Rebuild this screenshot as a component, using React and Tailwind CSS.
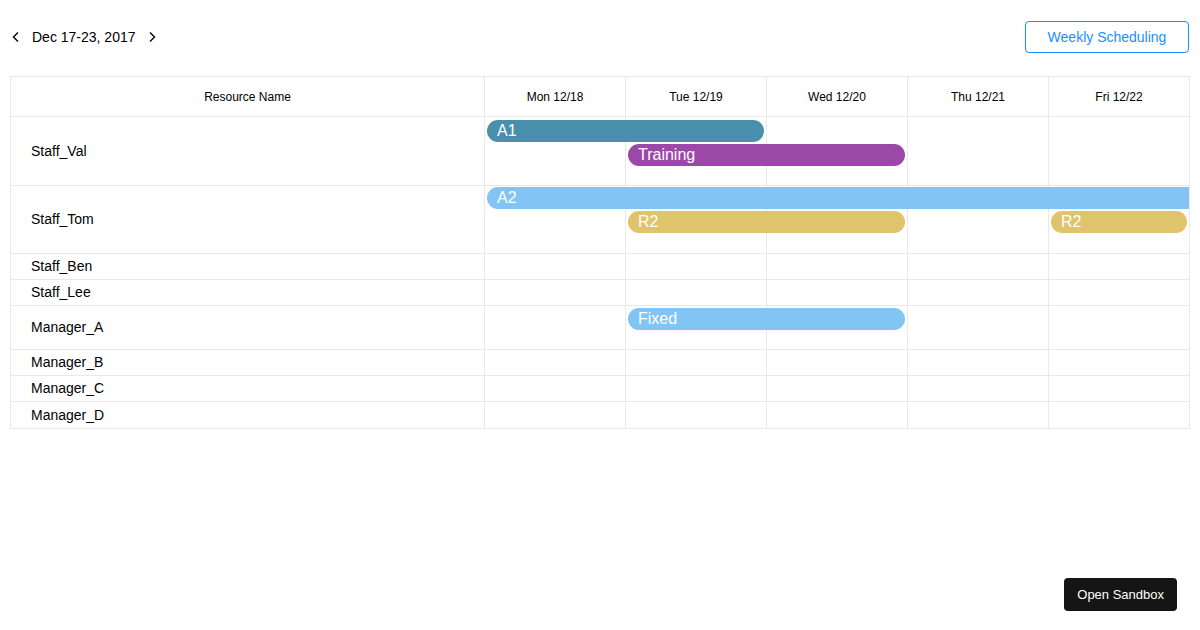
import React from "react";

const days = ["Mon 12/18", "Tue 12/19", "Wed 12/20", "Thu 12/21", "Fri 12/22"];
const DAY = 141;

const rows = [
  { name: "Staff_Val", h: "h-[69px]", events: [
    { label: "A1", start: 0, len: 2, top: 2, color: "bg-[#4a8fab]" },
    { label: "Training", start: 1, len: 2, top: 26, color: "bg-[#9b48a8]" },
  ] },
  { name: "Staff_Tom", h: "h-[68px]", events: [
    { label: "A2", start: 0, len: 5, top: 0, color: "bg-[#82c4f4]", open: true },
    { label: "R2", start: 1, len: 2, top: 24, color: "bg-[#dfc46c]" },
    { label: "R2", start: 4, len: 1, top: 24, color: "bg-[#dfc46c]" },
  ] },
  { name: "Staff_Ben", h: "h-[26px]", events: [] },
  { name: "Staff_Lee", h: "h-[26px]", events: [] },
  { name: "Manager_A", h: "h-[44px]", events: [
    { label: "Fixed", start: 1, len: 2, top: 1, color: "bg-[#82c4f4]" },
  ] },
  { name: "Manager_B", h: "h-[26px]", events: [] },
  { name: "Manager_C", h: "h-[26px]", events: [] },
  { name: "Manager_D", h: "h-[26px]", events: [] },
];

export default function App() {
  return (
    <div className="relative w-[1200px] h-[630px] bg-white text-black" style={{ fontFamily: '"Liberation Sans", Arial, sans-serif' }}>
      <div className="flex items-center justify-between pl-[10px] pr-[11px] pt-[21px]">
        <div className="flex items-center gap-[10px] text-[14px]">
          <svg width="12" height="12" viewBox="0 0 12 12" fill="none" stroke="#000" strokeWidth="1.4"><path d="M8 1.5 3.5 6 8 10.5" /></svg>
          <span>Dec 17-23, 2017</span>
          <svg width="12" height="12" viewBox="0 0 12 12" fill="none" stroke="#000" strokeWidth="1.4"><path d="M4 1.5 8.5 6 4 10.5" /></svg>
        </div>
        <button className="w-[164px] h-[32px] border border-[#1890ff] rounded-[4px] text-[#1890ff] text-[14px]">Weekly Scheduling</button>
      </div>

      <div className="mx-[10px] mt-[23px] w-[1180px] border border-[#e9e9e9]">
        <div className="flex h-[40px] border-b border-[#e9e9e9] text-[12px]">
          <div className="w-[474px] flex items-center justify-center border-r border-[#e9e9e9]">Resource Name</div>
          {days.map((d, i) => (
            <div key={d} className={`flex-1 flex items-center justify-center ${i < 4 ? "border-r border-[#e9e9e9]" : ""}`}>{d}</div>
          ))}
        </div>
        {rows.map((r, ri) => (
          <div key={r.name} className={`flex ${r.h} ${ri < rows.length - 1 ? "border-b border-[#e9e9e9]" : ""}`}>
            <div className="w-[474px] flex items-center pl-[20px] border-r border-[#e9e9e9] text-[14px]">{r.name}</div>
            <div className="relative flex-1 flex">
              {days.map((d, i) => (
                <div key={d} className={`flex-1 ${i < 4 ? "border-r border-[#e9e9e9]" : ""}`} />
              ))}
              {r.events.map((e, ei) => (
                <div
                  key={ei}
                  className={`absolute h-[22px] flex items-center pl-[10px] text-white text-[16px] ${e.color} ${e.open ? "rounded-l-[11px]" : "rounded-[11px]"}`}
                  style={{ top: e.top + 1, left: e.start * DAY + 2, width: e.open ? e.len * DAY - 3 : e.len * DAY - 5 }}
                >
                  {e.label}
                </div>
              ))}
            </div>
          </div>
        ))}
      </div>

      <button className="absolute right-[23px] bottom-[19px] bg-[#151515] text-white text-[13px] rounded-[4px] px-[13px] h-[33px]">Open Sandbox</button>
    </div>
  );
}
